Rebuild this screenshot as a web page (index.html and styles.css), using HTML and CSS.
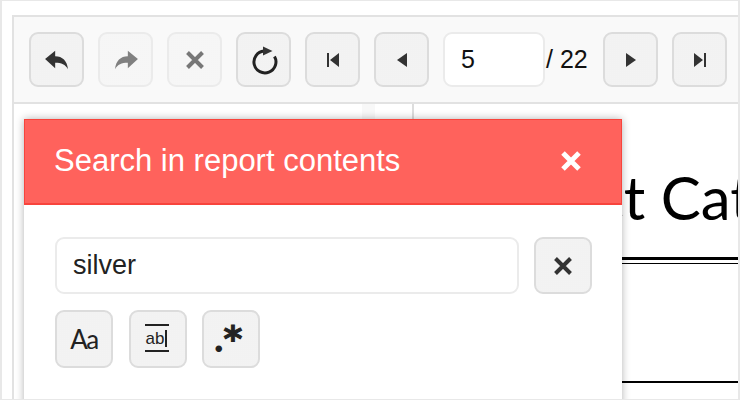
FILE: index.html
```html
<!DOCTYPE html>
<html lang="en">
<head>
  <meta charset="UTF-8">
  <title>Report viewer - search</title>
  <link rel="stylesheet" href="styles.css">
</head>
<body>

  <div class="window">
    <div class="viewer">

      <div class="toolbar">
        <button class="tool">
          <svg width="26" height="22" viewBox="0 0 28 24"><path class="dark" d="M1 11 12 2v6c8 0 13 5 14 14-3-5-7-7-14-7v6z"/></svg>
        </button>
        <button class="tool off">
          <svg width="26" height="22" viewBox="0 0 28 24"><path class="grey" d="M27 11 16 2v6C8 8 3 13 2 22c3-5 7-7 14-7v6z"/></svg>
        </button>
        <button class="tool off">
          <svg width="20" height="20" viewBox="0 0 20 20"><path class="grey-line" d="M2.500 2.500 17.500 17.500M17.500 2.500 2.500 17.500"/></svg>
        </button>
        <button class="tool">
          <svg width="30" height="32" viewBox="0 0 30 32"><path class="ring" d="M25.500 12.500A11 11 0 1 1 15 7"/><path class="dark" d="M14 2.500 23.500 7 14 11.500z"/></svg>
        </button>
        <button class="tool">
          <svg width="14" height="14" viewBox="0 0 14 14"><path class="dark" d="M1 0h2v14H1zM13 0v14L4 7z"/></svg>
        </button>
        <button class="tool">
          <svg width="12" height="14" viewBox="0 0 12 14"><path class="dark" d="M11 0v14L1 7z"/></svg>
        </button>
        <input class="page-input" type="text" value="5">
        <span class="page-total">/ 22</span>
        <button class="tool">
          <svg width="12" height="14" viewBox="0 0 12 14"><path class="dark" d="M1 0v14l10-7z"/></svg>
        </button>
        <button class="tool">
          <svg width="14" height="14" viewBox="0 0 14 14"><path class="dark" d="M1 0v14l9-7zM11 0h2v14h-2z"/></svg>
        </button>
      </div>

      <div class="content">
        <div class="sidebar">
          <div class="sidebar-track"></div>
        </div>
        <div class="report">
          <h1 class="report-title">Product Catalog</h1>
          <div class="report-rule"></div>
          <div class="report-row"></div>
        </div>

        <div class="search-panel">
          <div class="search-head">
            <h2>Search in report contents</h2>
            <svg width="22" height="22" viewBox="0 0 22 22"><path class="close-line" d="M3 3 19 19M19 3 3 19"/></svg>
          </div>
          <div class="search-body">
            <div class="search-row">
              <input class="search-input" type="text" value="silver">
              <button class="tool clear">
                <svg width="20" height="20" viewBox="0 0 20 20"><path class="dark-line" d="M2.500 2.500 17.500 17.500M17.500 2.500 2.500 17.500"/></svg>
              </button>
            </div>
            <div class="option-row">
              <button class="tool opt opt-case">Aa</button>
              <button class="tool opt opt-word"><span class="word-lines"><span class="word-text">ab</span></span></button>
              <button class="tool opt opt-regex"><span class="regex-dot">.</span><span class="regex-star">*</span></button>
            </div>
          </div>
        </div>
      </div>

    </div>
  </div>

</body>
</html>
```

FILE: styles.css
```css
body {
  margin: 0;
  font-family: "Liberation Sans", Arial, sans-serif;
  background: #fff;
  color: #222;
}

.window {
  box-sizing: border-box;
  width: 740px;
  height: 400px;
  padding: 14px 0 0 10px;
  border: 2px solid #e8e8e8;
  border-bottom-width: 1px;
  border-top-width: 1px;
  overflow: hidden;
}

.viewer {
  height: 100%;
  border-top: 2px solid #e2e2e2;
  border-left: 2px solid #e2e2e2;
  display: flex;
  flex-direction: column;
}

.toolbar {
  display: flex;
  align-items: center;
  height: 85px;
  flex-shrink: 0;
  padding-left: 15px;
  gap: 14px;
  background: #f9f9f9;
  border-bottom: 2px solid #e2e2e2;
}

.tool {
  width: 55px;
  height: 55px;
  padding: 0;
  flex-shrink: 0;
  display: flex;
  align-items: center;
  justify-content: center;
  background: #f7f7f7 radial-gradient(#eee 0.5px, transparent 1px) 0 0 / 2px 2px;
  border: 2px solid #dcdcdc;
  border-radius: 9px;
}

.tool.off {
  background: #f9f9f9 radial-gradient(#f2f2f2 0.5px, transparent 1px) 0 0 / 2px 2px;
  border-color: #ebebeb;
}

.dark {
  fill: #333;
}

.grey {
  fill: #808080;
}

.grey-line {
  stroke: #777;
  stroke-width: 4;
  fill: none;
}

.dark-line {
  stroke: #333;
  stroke-width: 4;
  fill: none;
}

.ring {
  stroke: #222;
  stroke-width: 3;
  fill: none;
}

.page-input {
  box-sizing: border-box;
  width: 102px;
  height: 55px;
  padding: 0 16px;
  font: 25px "Liberation Sans", Arial, sans-serif;
  color: #111;
  background: #fff;
  border: 2px solid #ebebeb;
  border-radius: 9px;
}

.page-total {
  width: 43px;
  margin: 0 0 0 -13px;
  font-size: 25px;
  color: #111;
}

.content {
  position: relative;
  flex: 1;
  display: flex;
  overflow: hidden;
}

.sidebar {
  width: 398px;
  flex-shrink: 0;
  border-right: 2px solid #ddd;
}

.sidebar-track {
  width: 13px;
  height: 100%;
  margin-left: 348px;
  background: #f8f8f8;
}

.report {
  flex: 1;
  overflow: hidden;
  padding-top: 57px;
}

.report-title {
  margin: 0 0 0 24px;
  font: 400 60px/72px Lato, sans-serif;
  color: #000;
  white-space: nowrap;
}

.report-rule {
  height: 3px;
  margin-top: 24px;
  border-top: 3px solid #000;
  border-bottom: 1px solid #000;
}

.report-row {
  height: 117px;
  border-bottom: 2px solid #000;
}

.search-panel {
  position: absolute;
  left: 10px;
  top: 15px;
  width: 598px;
  height: 320px;
  background: #fff;
  box-shadow: 0 0 8px rgba(0,0,0,0.3);
}

.search-head {
  box-sizing: border-box;
  height: 86px;
  padding: 0 39px 2px 29px;
  display: flex;
  align-items: center;
  justify-content: space-between;
  background: #ff625c;
  border: 1px solid #f8443c;
  border-bottom-width: 2px;
}

.search-head h2 {
  margin: 0;
  font-size: 31px;
  font-weight: 400;
  color: #fff;
}

.close-line {
  stroke: #fff;
  stroke-width: 5;
  fill: none;
}

.search-body {
  padding: 32px 29px 32px 31px;
}

.search-row {
  display: flex;
  gap: 15px;
}

.search-input {
  box-sizing: border-box;
  width: 464px;
  height: 57px;
  padding: 0 16px;
  font: 27px "Liberation Sans", Arial, sans-serif;
  color: #222;
  border: 2px solid #ebebeb;
  border-radius: 9px;
}

.clear {
  width: 58px;
  height: 57px;
}

.option-row {
  display: flex;
  gap: 15.5px;
  margin-top: 16px;
}

.opt {
  width: 58px;
  height: 58px;
  color: #222;
  font-family: "Liberation Sans", Arial, sans-serif;
}

.opt-case {
  font: 400 26px Lato, sans-serif;
  letter-spacing: -1.5px;
}

.word-lines {
  display: block;
  width: 24px;
  margin: 0 2px 2px 0;
  padding: 3.5px 0;
  border-top: 2px solid #222;
  border-bottom: 2px solid #222;
  text-align: left;
}

.word-text {
  display: block;
  width: 22px;
  padding-left: 1px;
  box-sizing: border-box;
  font-size: 17px;
  line-height: 17px;
  border-right: 2px solid #222;
}

.opt-regex {
  justify-content: flex-start;
  align-items: flex-start;
  padding-left: 10px;
  line-height: 1;
}

.regex-dot {
  margin-top: 5px;
  font: 900 40px/1 Lato, sans-serif;
}

.regex-star {
  margin-top: 9px;
  font: 700 36px/1 "DejaVu Sans", sans-serif;
  -webkit-text-stroke: 1px #222;
}
```
